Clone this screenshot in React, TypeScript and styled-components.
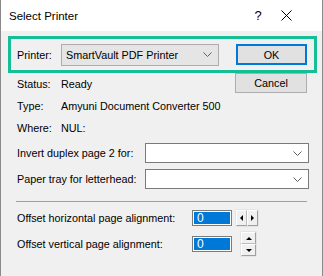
import React from "react";
import styled, { createGlobalStyle } from "styled-components";

const GlobalStyle = createGlobalStyle`
    html, body {
        margin: 0;
        padding: 0;
        background: #ffffff;
    }
    * {
        box-sizing: border-box;
    }
`;

const uiFont = `"Liberation Sans", Arial, sans-serif`;

const Window = styled.div`
    width: 323px;
    height: 276px;
    background: #f0f0f0;
    border-left: 1px solid #8a8a8a;
    border-right: 1px solid #8a8a8a;
    display: flex;
    flex-direction: column;
    font-family: ${uiFont};
    font-size: 10.8px;
    color: #000;
    overflow: hidden;
`;

const TitleBar = styled.div`
    height: 31px;
    background: #ffffff;
    display: flex;
    align-items: center;
    padding-left: 8px;
`;

const Title = styled.div`
    flex: 1;
    font-size: 11.5px;
    padding-top: 1px;
`;

const TitleButton = styled.div<{ $w: number }>`
    width: ${p => p.$w}px;
    height: 31px;
    display: flex;
    align-items: center;
    justify-content: center;
    font-size: 13px;
`;

const Content = styled.div`
    padding: 5px 0 0 7px;
    display: flex;
    flex-direction: column;
`;

const Highlight = styled.div`
    width: 309px;
    height: 37px;
    border: 3px solid #14bf96;
    display: flex;
    align-items: center;
    padding-left: 6px;
`;

const Label = styled.div<{ $w: number }>`
    width: ${p => p.$w}px;
    flex-shrink: 0;
    white-space: nowrap;
`;

const Combo = styled.div<{ $w: number; $h: number; $white?: boolean }>`
    width: ${p => p.$w}px;
    height: ${p => p.$h}px;
    background: ${p => (p.$white ? "#ffffff" : "#e5e5e5")};
    border: 1px solid ${p => (p.$white ? "#7a7a7a" : "#adadad")};
    display: flex;
    align-items: center;
    padding: 0 6px 0 4px;
    white-space: nowrap;
`;

const ComboText = styled.div`
    flex: 1;
`;

const Button = styled.div<{ $default?: boolean }>`
    width: ${p => (p.$default ? 71 : 72)}px;
    height: ${p => (p.$default ? 21 : 20)}px;
    background: #e1e1e1;
    border: ${p => (p.$default ? "2px solid #0078d7" : "1px solid #adadad")};
    display: flex;
    align-items: center;
    justify-content: center;
`;

const OkSlot = styled.div`
    margin-left: 17px;
`;

const InfoArea = styled.div`
    display: flex;
    width: 309px;
`;

const InfoList = styled.div`
    flex: 1;
    padding-left: 9px;
`;

const InfoRow = styled.div`
    height: 22px;
    display: flex;
    align-items: center;
    white-space: nowrap;
`;

const CancelSlot = styled.div`
    margin-right: 10px;
`;

const FieldList = styled.div`
    display: flex;
    flex-direction: column;
    gap: 6px;
    margin-top: 4px;
    padding-left: 9px;
`;

const FieldRow = styled.div`
    display: flex;
    align-items: center;
`;

const Separator = styled.div`
    margin: 12px 0 0 8px;
    width: 291px;
    height: 1px;
    background: #a0a0a0;
`;

const OffsetList = styled.div`
    display: flex;
    flex-direction: column;
    gap: 6px;
    margin-top: 8px;
    padding-left: 9px;
`;

const OffsetRow = styled.div`
    display: flex;
    align-items: center;
`;

const Edit = styled.div`
    width: 40px;
    height: 16px;
    border: 1px solid #7a7a7a;
    background: #0078d7;
    box-shadow: inset 0 0 0 1px #ffffff;
    color: #ffffff;
    display: flex;
    align-items: center;
    padding-left: 4px;
    font-size: 12px;
    line-height: 1;
`;

const Spin = styled.div<{ $vertical?: boolean; $offset: number }>`
    margin-left: ${p => p.$offset}px;
    display: flex;
    flex-direction: ${p => (p.$vertical ? "column" : "row")};
`;

const SpinButton = styled.div<{ $vertical?: boolean }>`
    width: ${p => (p.$vertical ? 15 : 11)}px;
    height: ${p => (p.$vertical ? 12 : 16)}px;
    background: #f0f0f0;
    border-top: 1px solid #ffffff;
    border-left: 1px solid #ffffff;
    border-right: 1px solid #a0a0a0;
    border-bottom: 1px solid #a0a0a0;
    box-shadow: 0 0 0 0.5px #d8d8d8;
    display: flex;
    align-items: center;
    justify-content: center;
`;

const Chevron: React.FC<{ color?: string }> = ({ color = "#606060" }) => (
    <svg width="9" height="5" viewBox="0 0 9 5">
        <path d="M0.5 0.5 L4.5 4.5 L8.5 0.5" fill="none" stroke={color} strokeWidth="1" />
    </svg>
);

const Arrow: React.FC<{ dir: "left" | "right" | "up" | "down" }> = ({ dir }) => {
    const points = {
        left: "3,0 3,6 0,3",
        right: "0,0 0,6 3,3",
        up: "0,3 6,3 3,0",
        down: "0,0 6,0 3,3",
    }[dir];
    const vertical = dir === "up" || dir === "down";
    return (
        <svg width={vertical ? 6 : 3} height={vertical ? 3 : 6} viewBox={vertical ? "0 0 6 3" : "0 0 3 6"}>
            <polygon points={points} fill="#000" />
        </svg>
    );
};

const CloseIcon = () => (
    <svg width="11" height="11" viewBox="0 0 11 11">
        <path d="M0.5 0.5 L10.5 10.5 M10.5 0.5 L0.5 10.5" stroke="#000" strokeWidth="1" />
    </svg>
);

const App: React.FC = () => {
    return (
        <>
            <GlobalStyle />
            <Window>
                <TitleBar>
                    <Title>Select Printer</Title>
                    <TitleButton $w={12}>?</TitleButton>
                    <TitleButton $w={44}>
                        <CloseIcon />
                    </TitleButton>
                    <TitleButton $w={14} />
                </TitleBar>
                <Content>
                    <Highlight>
                        <Label $w={44}>Printer:</Label>
                        <Combo $w={158} $h={22}>
                            <ComboText>SmartVault PDF Printer</ComboText>
                            <Chevron />
                        </Combo>
                        <OkSlot>
                            <Button $default>OK</Button>
                        </OkSlot>
                    </Highlight>
                    <InfoArea>
                        <InfoList>
                            <InfoRow>
                                <Label $w={44}>Status:</Label>
                                Ready
                            </InfoRow>
                            <InfoRow>
                                <Label $w={44}>Type:</Label>
                                Amyuni Document Converter 500
                            </InfoRow>
                            <InfoRow>
                                <Label $w={44}>Where:</Label>
                                NUL:
                            </InfoRow>
                        </InfoList>
                        <CancelSlot>
                            <Button>Cancel</Button>
                        </CancelSlot>
                    </InfoArea>
                    <FieldList>
                        <FieldRow>
                            <Label $w={128}>Invert duplex page 2 for:</Label>
                            <Combo $w={164} $h={20} $white>
                                <ComboText />
                                <Chevron />
                            </Combo>
                        </FieldRow>
                        <FieldRow>
                            <Label $w={128}>Paper tray for letterhead:</Label>
                            <Combo $w={164} $h={20} $white>
                                <ComboText />
                                <Chevron />
                            </Combo>
                        </FieldRow>
                    </FieldList>
                    <Separator />
                    <OffsetList>
                        <OffsetRow>
                            <Label $w={175}>Offset horizontal page alignment:</Label>
                            <Edit>0</Edit>
                            <Spin $offset={4}>
                                <SpinButton>
                                    <Arrow dir="left" />
                                </SpinButton>
                                <SpinButton>
                                    <Arrow dir="right" />
                                </SpinButton>
                            </Spin>
                        </OffsetRow>
                        <OffsetRow>
                            <Label $w={175}>Offset vertical page alignment:</Label>
                            <Edit>0</Edit>
                            <Spin $vertical $offset={9}>
                                <SpinButton $vertical>
                                    <Arrow dir="up" />
                                </SpinButton>
                                <SpinButton $vertical>
                                    <Arrow dir="down" />
                                </SpinButton>
                            </Spin>
                        </OffsetRow>
                    </OffsetList>
                </Content>
            </Window>
        </>
    );
};

export default App;
